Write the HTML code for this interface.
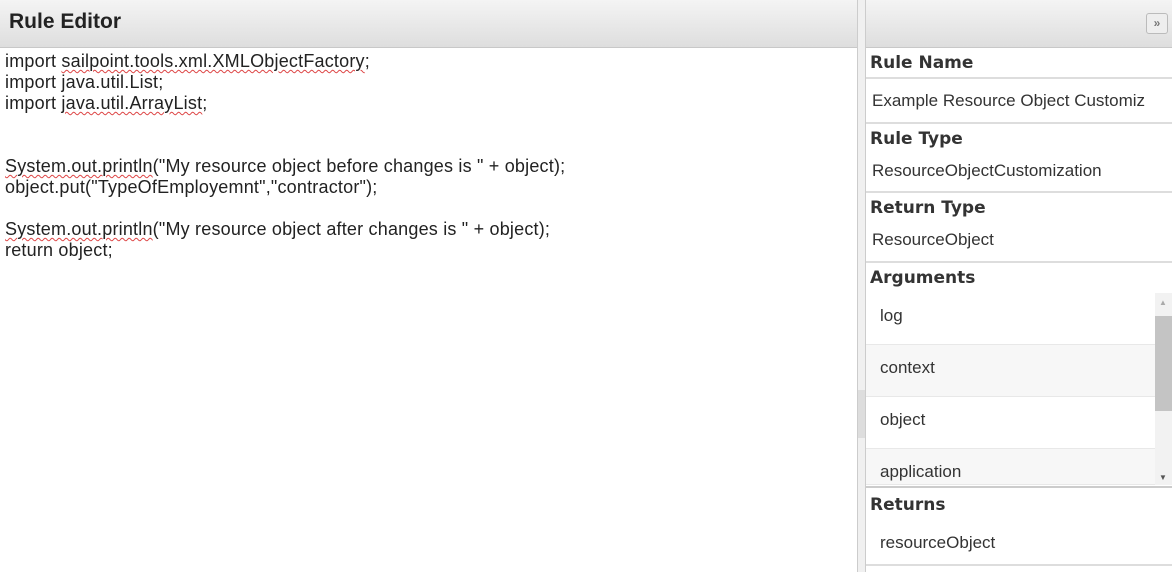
<!DOCTYPE html>
<html><head><meta charset="utf-8"><style>
*{margin:0;padding:0;box-sizing:border-box}
body{width:1172px;height:572px;overflow:hidden;background:#fff;font-family:"Liberation Sans",Arial,sans-serif;position:relative}
.left{position:absolute;left:0;top:0;width:857px;height:572px;background:#fff}
.hdr{position:absolute;left:0;top:0;height:48px;background:linear-gradient(#f4f4f4,#dedede);border-bottom:1px solid #c8c8c8}
.left .hdr{width:857px}
.left .hdr span{position:absolute;left:9px;top:10px;font-size:21px;font-weight:bold;color:#222}
.code{position:absolute;left:5px;top:51px;font-size:18px;line-height:21px;color:#222;white-space:pre;letter-spacing:0.2px}
.sq{text-decoration:underline wavy #d44;text-decoration-thickness:1px;text-underline-offset:2px}
.div{position:absolute;left:857px;top:0;width:9px;height:572px;background:#f0f0f0;border-left:1px solid #ccc;border-right:1px solid #ccc}
.grip{position:absolute;left:858px;top:390px;width:7px;height:48px;background:#ddd}
.right{position:absolute;left:866px;top:0;width:306px;height:572px;background:#fff}
.right .hdr{width:306px}
.btn{position:absolute;right:4px;top:13px;width:22px;height:21px;border:1px solid #bbb;border-radius:3px;background:#eee;font-size:12px;color:#777;text-align:center;line-height:18px;font-weight:bold}
.t{position:absolute;left:4px;font-weight:bold;color:#333;font-family:"DejaVu Sans","Liberation Sans",sans-serif;font-size:17px}
.v{position:absolute;left:6px;font-size:17px;color:#333}
.ln{position:absolute;left:0;width:306px;height:2px;background:#ddd}
.it{position:absolute;left:0;width:289px;height:52px;font-size:17px;color:#333;padding:13px 0 0 14px;border-bottom:1px solid #e8e8e8}
.sb{position:absolute;left:289px;top:293px;width:17px;height:192px;background:#f2f2f2}
.th{position:absolute;left:289px;top:316px;width:17px;height:95px;background:#c4c4c4}
</style></head><body>
<div class="left">
<div class="hdr"><span>Rule Editor</span></div>
<div class="code">import <span class="sq">sailpoint.tools.xml.XMLObjectFactory</span>;
import java.util.List;
import <span class="sq">java.util.ArrayList</span>;


<span class="sq">System.out.println</span>("My resource object before changes is " + object);
object.put("TypeOfEmployemnt","contractor");

<span class="sq">System.out.println</span>("My resource object after changes is " + object);
return object;</div>
</div>
<div class="div"></div><div class="grip"></div>
<div class="right">
<div class="hdr"><div class="btn">»</div></div>
<div class="t" style="top:53px">Rule Name</div>
<div class="ln" style="top:77px"></div>
<div class="v" style="top:91px">Example Resource Object Customiz</div>
<div class="ln" style="top:122px"></div>
<div class="t" style="top:129px">Rule Type</div>
<div class="v" style="top:161px">ResourceObjectCustomization</div>
<div class="ln" style="top:191px"></div>
<div class="t" style="top:198px">Return Type</div>
<div class="v" style="top:230px">ResourceObject</div>
<div class="ln" style="top:261px"></div>
<div class="t" style="top:268px">Arguments</div>
<div class="it" style="top:293px;background:#fff">log</div>
<div class="it" style="top:345px;background:#f7f7f7">context</div>
<div class="it" style="top:397px;background:#fff">object</div>
<div class="it" style="top:449px;height:36px;background:#f7f7f7">application</div>
<div class="sb"></div><div class="th"></div>
<div style="position:absolute;left:293px;top:298px;font-size:8px;color:#aaa">▲</div>
<div style="position:absolute;left:293px;top:473px;font-size:8px;color:#555">▼</div>
<div class="ln" style="top:486px;background:#ccc"></div>
<div class="t" style="top:495px">Returns</div>
<div class="v" style="top:533px;left:14px">resourceObject</div>
<div class="ln" style="top:564px"></div>
</div>
</body></html>
